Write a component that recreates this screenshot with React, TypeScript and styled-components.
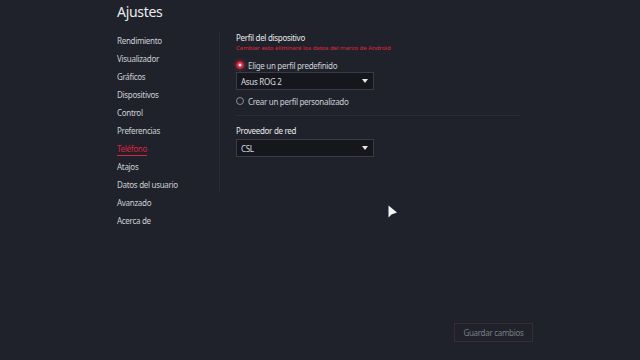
import styled, { createGlobalStyle } from 'styled-components'

const GlobalStyle = createGlobalStyle`
  html, body {
    margin: 0;
    padding: 0;
    background: #1f222a;
  }
  body {
    font-family: "Noto Sans", "Open Sans", sans-serif;
    overflow: hidden;
  }
`

const menu = [
  'Rendimiento',
  'Visualizador',
  'Gráficos',
  'Dispositivos',
  'Control',
  'Preferencias',
  'Teléfono',
  'Atajos',
  'Datos del usuario',
  'Avanzado',
  'Acerca de',
]

const RED = '#d8243f'

// Segoe-like text is narrower than Noto Sans, so tighten a bit
const bodyText = `
  font-size: 8px;
  letter-spacing: -0.3px;
`

const Caret = () => (
  <svg width="6" height="4" viewBox="0 0 6 4">
    <polygon points="0,0 6,0 3,4" fill="#e8e8e8" />
  </svg>
)

const Pointer = () => (
  <svg width="10" height="14" viewBox="0 0 10 14">
    <polygon points="0.5,0.5 0.5,12.5 3.5,9.5 9,7.5" fill="#f4f4f4" />
  </svg>
)

const App = () => {
  const active = 'Teléfono'

  return (
    <Page>
      <GlobalStyle />
      <Title>Ajustes</Title>

      <Body>
        <Sidebar>
          {menu.map((item) => (
            <MenuItem key={item} $active={item === active}>
              <span>{item}</span>
            </MenuItem>
          ))}
        </Sidebar>

        <Content>
          <SectionTitle>Perfil del dispositivo</SectionTitle>
          <Warning>Cambiar esto eliminará los datos del marco de Android</Warning>

          <RadioRow $top={7}>
            <Radio $checked />
            <span>Elige un perfil predefinido</span>
          </RadioRow>
          <Select $top={1}>
            <span>Asus ROG 2</span>
            <Caret />
          </Select>
          <RadioRow $top={5}>
            <Radio />
            <span>Crear un perfil personalizado</span>
          </RadioRow>

          <Separator />

          <SectionTitle>Proveedor de red</SectionTitle>
          <Select $top={2}>
            <span>CSL</span>
            <Caret />
          </Select>
        </Content>
      </Body>

      <Footer>
        <SaveButton>Guardar cambios</SaveButton>
      </Footer>

      <Cursor>
        <Pointer />
      </Cursor>
    </Page>
  )
}

const Page = styled.div`
  position: relative;
  width: 640px;
  height: 360px;
  display: flex;
  flex-direction: column;
  padding-left: 117px;
  box-sizing: border-box;
  background: #1f222a;
`

const Title = styled.h1`
  margin: 2px 0 0;
  font-size: 14px;
  line-height: 20px;
  font-weight: 400;
  letter-spacing: -0.3px;
  color: #ececee;
`

const Body = styled.div`
  display: flex;
  margin-top: 10px;
`

const Sidebar = styled.ul`
  list-style: none;
  margin: 0;
  padding: 0;
  width: 102px;
`

const MenuItem = styled.li<{ $active?: boolean }>`
  ${bodyText}
  line-height: 18px;
  height: 18px;
  color: ${(p) => (p.$active ? RED : '#cdd0d6')};

  span {
    display: inline-block;
    line-height: 12px;
    border-bottom: 1.5px solid ${(p) => (p.$active ? RED : 'transparent')};
  }
`

const Content = styled.section`
  display: flex;
  flex-direction: column;
  align-items: flex-start;
  width: 284px;
  height: 160px;
  padding-left: 16px;
  border-left: 1px solid #282b33;
`

const SectionTitle = styled.div`
  ${bodyText}
  line-height: 12px;
  color: #e8e9ec;
`

const Warning = styled.div`
  font-size: 6px;
  line-height: 8px;
  color: #e0263f;
`

const RadioRow = styled.label<{ $top: number }>`
  ${bodyText}
  display: flex;
  align-items: center;
  gap: 4px;
  margin-top: ${(p) => p.$top}px;
  height: 12px;
  color: #cdd0d6;
`

const Radio = styled.span<{ $checked?: boolean }>`
  width: 8px;
  height: 8px;
  border-radius: 50%;
  box-sizing: border-box;
  border: 1px solid ${(p) => (p.$checked ? RED : '#8a8d95')};
  background: ${(p) =>
    p.$checked ? `radial-gradient(circle, #ffffff 0 1.2px, ${RED} 1.8px)` : 'transparent'};
  box-shadow: ${(p) => (p.$checked ? '0 0 4px rgba(230, 40, 70, 0.7)' : 'none')};
`

const Select = styled.div<{ $top: number }>`
  ${bodyText}
  display: flex;
  align-items: center;
  justify-content: space-between;
  margin-top: ${(p) => p.$top}px;
  width: 138px;
  height: 18px;
  padding: 0 5px 0 4px;
  box-sizing: border-box;
  background: #15171d;
  border: 1px solid #383c46;
  color: #dcdde0;
`

const Separator = styled.hr`
  align-self: stretch;
  margin: 8px 0 9px;
  border: none;
  border-top: 1px solid #2a2d35;
  width: 284px;
`

const Footer = styled.div`
  margin-top: auto;
  display: flex;
  justify-content: flex-end;
  padding: 0 107px 18px 0;
`

const SaveButton = styled.button`
  ${bodyText}
  width: 79px;
  height: 19px;
  padding: 0;
  background: transparent;
  border: 1px solid #3a2a33;
  font-family: inherit;
  color: #7b7e87;
`

const Cursor = styled.div`
  position: absolute;
  left: 388px;
  top: 205px;
  line-height: 0;
`

export default App
